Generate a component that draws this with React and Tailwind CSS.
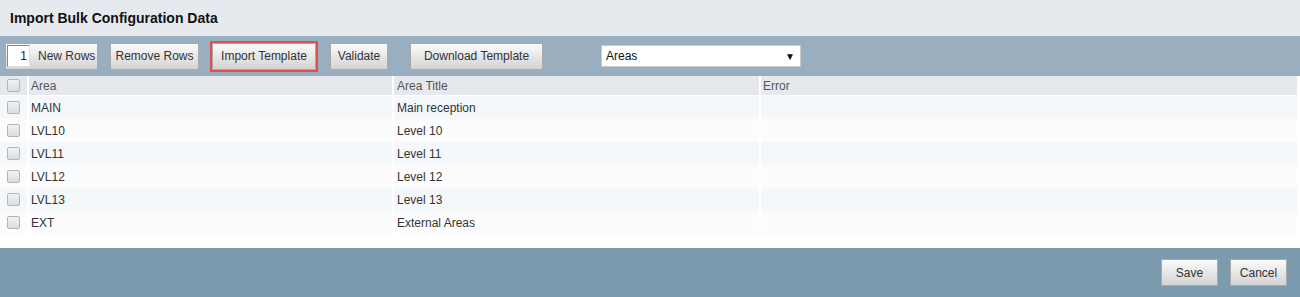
import React from 'react';

const rows = [
    { area: 'MAIN', title: 'Main reception' },
    { area: 'LVL10', title: 'Level 10' },
    { area: 'LVL11', title: 'Level 11' },
    { area: 'LVL12', title: 'Level 12' },
    { area: 'LVL13', title: 'Level 13' },
    { area: 'EXT', title: 'External Areas' },
];

const btn = 'h-[27px] border border-[#a9a9a9] bg-gradient-to-b from-[#fbfbfb] to-[#d3d3d3] text-[12px] text-[#333] px-[7px] flex items-center whitespace-nowrap';

function Check() {
    return <span className="block w-[13px] h-[13px] rounded-[2px] border border-[#b5b5b5] bg-gradient-to-b from-[#f3f3f3] to-[#dcdcdc]" />;
}

function Row({ bg, cells, head }) {
    return (
        <div className={`flex gap-[2px] ${head ? 'h-[19px] text-[#555]' : 'h-[23px]'}`}>
            <div className={`w-[27px] flex items-center justify-center ${bg}`}><Check /></div>
            <div className={`w-[363px] flex items-center pl-[2px] ${bg}`}>{cells[0]}</div>
            <div className={`w-[365px] flex items-center pl-[3px] ${bg}`}>{cells[1]}</div>
            <div className={`w-[536px] flex items-center pl-[2px] ${bg}`}>{cells[2]}</div>
        </div>
    );
}

export default function App() {
    return (
        <div className="w-[1300px] h-[297px] bg-white flex flex-col text-[#333] text-[12px]" style={{ fontFamily: '"Liberation Sans", Arial, sans-serif' }}>
            {/* Title */}
            <div className="h-[36px] bg-[#e6e9ed] flex items-center pl-[10px]">
                <h1 className="font-bold text-[14px] text-[#111]">Import Bulk Configuration Data</h1>
            </div>

            {/* Toolbar */}
            <div className="h-[40px] bg-[#99aebf] flex items-center">
                <div className={`${btn} ml-[5px] w-[93px] pl-0`}>
                    <span className="shrink-0 w-[23px] h-[22px] bg-white border border-t-[#8a8a8a] border-l-[#8a8a8a] border-r-[#e0e0e0] border-b-[#e0e0e0] text-right pr-[2px] leading-[20px] ml-[1px] text-[#222]">1</span>
                    <span className="ml-[8px]">New Rows</span>
                </div>
                <div className={`${btn} ml-[12px] w-[89px] justify-center`}>Remove Rows</div>
                <div className="ml-[11px] border-[2px] border-[#e84a4f]">
                    <div className={`${btn} w-[104px] h-[25px] justify-center`}>Import Template</div>
                </div>
                <div className={`${btn} ml-[12px] w-[58px] justify-center`}>Validate</div>
                <div className={`${btn} ml-[22px] w-[133px] justify-center`}>Download Template</div>
                <div className="ml-[58px] w-[200px] h-[22px] bg-white border border-[#c9c9c9] flex items-center justify-between px-[4px] text-[#111]">
                    <span>Areas</span>
                    <span className="text-[10px] mr-[1px]">▼</span>
                </div>
            </div>

            {/* Table */}
            <div className="flex flex-col gap-[1px]">
                <Row head bg="bg-[#e5e9ed]" cells={['Area', 'Area Title', 'Error']} />
                <div>
                    {rows.map((r, i) => (
                        <Row key={r.area} bg={i % 2 === 0 ? 'bg-[#f4f8fb]' : 'bg-[#fcfcfc]'} cells={[r.area, r.title, '']} />
                    ))}
                </div>
            </div>

            <div className="flex-1" />

            {/* Footer */}
            <div className="h-[49px] bg-[#7b9aae] flex items-center justify-end pr-[13px] gap-[12px]">
                <div className={`${btn} w-[57px] justify-center`}>Save</div>
                <div className={`${btn} w-[57px] justify-center`}>Cancel</div>
            </div>
        </div>
    );
}
